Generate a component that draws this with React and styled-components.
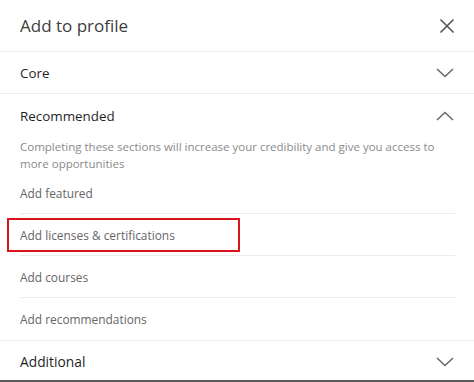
import React from "react";
import styled, { createGlobalStyle } from "styled-components";

const Global = createGlobalStyle`
  html, body { margin: 0; padding: 0; background: #fff; }
  body { font-family: "Open Sans", "Noto Sans", sans-serif; }
`;

const Modal = styled.div`
  width: 474px;
  height: 382px;
  box-sizing: border-box;
  background: #fff;
  display: flex;
  flex-direction: column;
  overflow: hidden;
  border-bottom: 2px solid #5a5a5a;
  & > * { flex-shrink: 0; }
`;

const Header = styled.div`
  height: 52px;
  box-sizing: border-box;
  display: flex;
  align-items: center;
  justify-content: space-between;
  padding: 0 19px 0 20px;
  border-bottom: 1px solid #ebebeb;
`;

const Title = styled.h2`
  margin: 0;
  font-size: 17px;
  font-weight: 400;
  color: #3d3d3d;
`;

const IconBtn = styled.span`
  display: flex;
  align-items: center;
  justify-content: center;
  width: 16px;
  height: 16px;
`;

const SectionHead = styled.div`
  height: ${(p) => p.$h || 42}px;
  box-sizing: border-box;
  display: flex;
  align-items: center;
  justify-content: space-between;
  padding: 0 20px 0 20px;
  border-bottom: ${(p) => (p.$border ? "1px solid #ebebeb" : "none")};
`;

const SectionTitle = styled.span`
  font-size: ${(p) => p.$size || 13.4}px;
  color: #1f1f1f;
  font-weight: 400;
`;

const Desc = styled.p`
  margin: 0;
  padding: 0 20px;
  font-size: 11.5px;
  line-height: 17px;
  color: #8a8a8a;
`;

const ItemList = styled.div`
  display: flex;
  flex-direction: column;
  border-bottom: 1px solid #ebebeb;
`;

const Item = styled.div`
  position: relative;
  height: 42px;
  box-sizing: border-box;
  margin: 0 19px 0 20px;
  display: flex;
  align-items: center;
  font-size: 11.9px;
  color: #666;
  border-bottom: ${(p) => (p.$last ? "none" : "1px solid #ebebeb")};
`;

const Highlight = styled.span`
  position: absolute;
  left: -13px;
  top: 4px;
  width: 233px;
  height: 34px;
  box-sizing: border-box;
  border: 2px solid #d9141f;
`;

const Chevron = ({ up }) => (
  <svg width="18" height="10" viewBox="0 0 18 10">
    <path
      d={up ? "M1 9 L9 1.5 L17 9" : "M1 1 L9 8.5 L17 1"}
      fill="none"
      stroke="#666"
      strokeWidth="1.5"
    />
  </svg>
);

const Close = () => (
  <svg width="16" height="16" viewBox="0 0 16 16">
    <path d="M1.5 1.5 L14.5 14.5 M14.5 1.5 L1.5 14.5" stroke="#555" strokeWidth="1.6" fill="none" />
  </svg>
);

export default function App() {
  const items = [
    "Add featured",
    "Add licenses & certifications",
    "Add courses",
    "Add recommendations",
  ];
  return (
    <>
      <Global />
      <Modal>
        <Header>
          <Title>Add to profile</Title>
          <IconBtn>
            <Close />
          </IconBtn>
        </Header>
        <SectionHead $border>
          <SectionTitle>Core</SectionTitle>
          <Chevron />
        </SectionHead>
        <SectionHead $h={44}>
          <SectionTitle>Recommended</SectionTitle>
          <Chevron up />
        </SectionHead>
        <Desc>
          Completing these sections will increase your credibility and give you access to more
          opportunities
        </Desc>
        <ItemList>
          {items.map((t, i) => (
            <Item key={t} $last={i === items.length - 1}>
              {i === 1 && <Highlight />}
              {t}
            </Item>
          ))}
        </ItemList>
        <SectionHead $h={41}>
          <SectionTitle $size={13.8}>Additional</SectionTitle>
          <Chevron />
        </SectionHead>
      </Modal>
    </>
  );
}
